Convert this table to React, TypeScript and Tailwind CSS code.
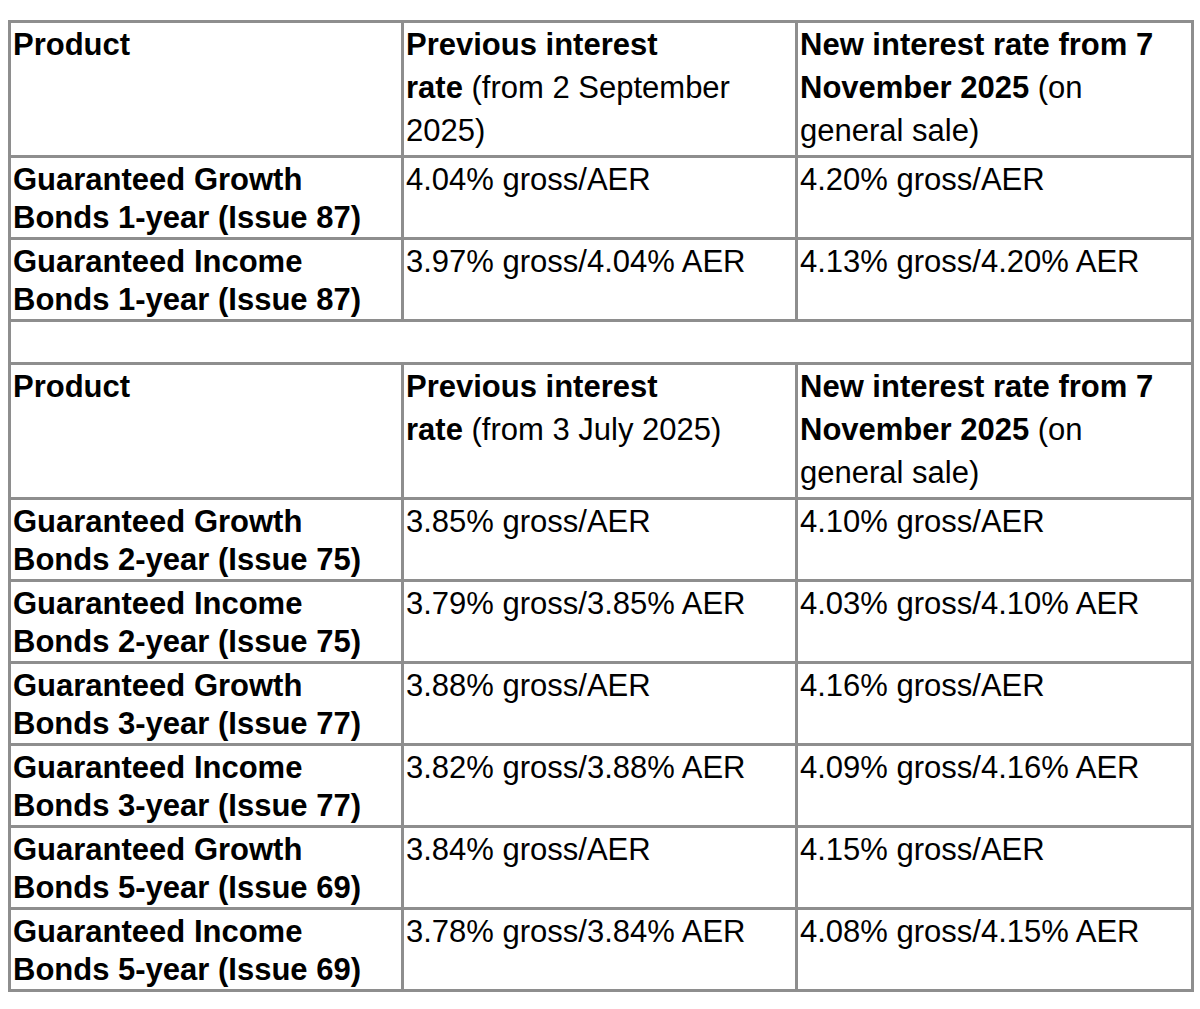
import React from 'react';

type Row = { product: [string, string]; prev: string; next: string };

const firstRows: Row[] = [
  { product: ['Guaranteed Growth', 'Bonds 1-year (Issue 87)'], prev: '4.04% gross/AER', next: '4.20% gross/AER' },
  { product: ['Guaranteed Income', 'Bonds 1-year (Issue 87)'], prev: '3.97% gross/4.04% AER', next: '4.13% gross/4.20% AER' },
];

const secondRows: Row[] = [
  { product: ['Guaranteed Growth', 'Bonds 2-year (Issue 75)'], prev: '3.85% gross/AER', next: '4.10% gross/AER' },
  { product: ['Guaranteed Income', 'Bonds 2-year (Issue 75)'], prev: '3.79% gross/3.85% AER', next: '4.03% gross/4.10% AER' },
  { product: ['Guaranteed Growth', 'Bonds 3-year (Issue 77)'], prev: '3.88% gross/AER', next: '4.16% gross/AER' },
  { product: ['Guaranteed Income', 'Bonds 3-year (Issue 77)'], prev: '3.82% gross/3.88% AER', next: '4.09% gross/4.16% AER' },
  { product: ['Guaranteed Growth', 'Bonds 5-year (Issue 69)'], prev: '3.84% gross/AER', next: '4.15% gross/AER' },
  { product: ['Guaranteed Income', 'Bonds 5-year (Issue 69)'], prev: '3.78% gross/3.84% AER', next: '4.08% gross/4.15% AER' },
];

const border = 'border-[3px] border-[#8e8e8e] px-[2px] align-top';
const headCell = border + ' pt-0 pb-[3px]';
const dataCell = border + ' pt-[3px] pb-0';

function HeaderRow({ from }: { from: string }) {
  return (
    <tr className="leading-[43px]">
      <td className={headCell}>
        <b>Product</b>
      </td>
      <td className={headCell}>
        <b>
          Previous interest
          <br />
          rate
        </b>{' '}
        (from {from})
      </td>
      <td className={headCell}>
        <b>New interest rate from 7 November 2025</b> (on general sale)
      </td>
    </tr>
  );
}

function DataRow({ row }: { row: Row }) {
  return (
    <tr className="leading-[38px]">
      <td className={dataCell}>
        <b>
          {row.product[0]}
          <br />
          {row.product[1]}
        </b>
      </td>
      <td className={dataCell}>{row.prev}</td>
      <td className={dataCell}>{row.next}</td>
    </tr>
  );
}

export default function App() {
  return (
    <div className="min-h-[1009px] w-[1200px] bg-white pt-[20px] pl-[8px] font-['Liberation_Sans',Arial,sans-serif] text-[31px] text-black">
      <table className="w-[1183px] table-fixed border-collapse">
        <colgroup>
          <col className="w-[393px]" />
          <col className="w-[394px]" />
          <col className="w-[396px]" />
        </colgroup>
        <tbody>
          <HeaderRow from="2 September 2025" />
          {firstRows.map((r) => (
            <DataRow key={r.product.join(' ')} row={r} />
          ))}
          <tr>
            <td colSpan={3} className={border + ' h-[43px]'}></td>
          </tr>
          <HeaderRow from="3 July 2025" />
          {secondRows.map((r) => (
            <DataRow key={r.product.join(' ')} row={r} />
          ))}
        </tbody>
      </table>
    </div>
  );
}
